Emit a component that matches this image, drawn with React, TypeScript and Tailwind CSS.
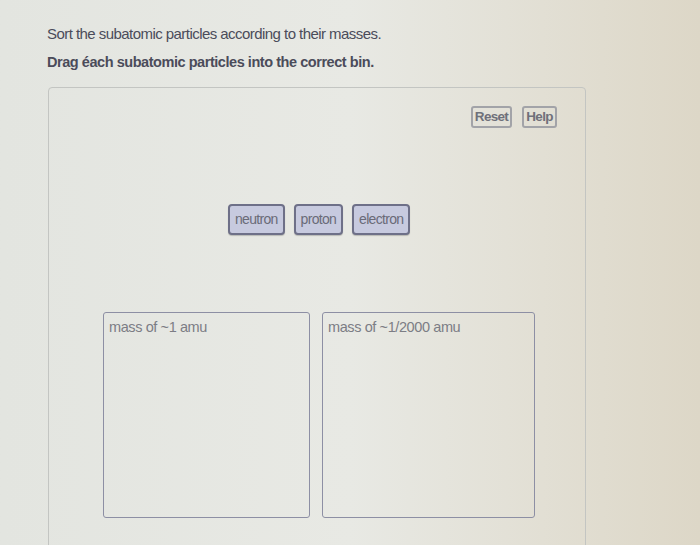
import React from 'react';

const particles = ['neutron', 'proton', 'electron'];

const bins = [
  { label: 'mass of ~1 amu', w: 'w-[207px]' },
  { label: 'mass of ~1/2000 amu', w: 'w-[213px]' },
];

export default function App() {
  return (
    <div className="h-[545px] w-[700px] overflow-hidden bg-gradient-to-r from-[#e3e5e0] via-[#e8e9e4] to-[#ddd7c7] font-['Liberation_Sans',Arial,sans-serif] text-[#4b4c5a]">
      <div className="pl-[47px] pt-[24px]">
        <p className="text-[15px] leading-[20px] tracking-[-0.55px]">Sort the subatomic particles according to their masses.</p>
        <p className="mt-[8px] text-[14.5px] font-bold leading-[20px] tracking-[-0.45px]">Drag éach subatomic particles into the correct bin.</p>
      </div>

      <div className="ml-[48px] mt-[15px] h-[470px] w-[538px] rounded-t-[4px] border border-[#c3c5c2] pt-[18px]">
        <div className="flex justify-end gap-[10px] pr-[28px]">
          <button className="h-[22px] rounded-[3px] border-2 border-[#a2a3a8] px-[2px] text-[13.5px] font-bold leading-none tracking-[-0.7px] text-[#6f707a]">
            Reset
          </button>
          <button className="h-[22px] rounded-[3px] border-2 border-[#a2a3a8] px-[2px] text-[13.5px] font-bold leading-none tracking-[-0.6px] text-[#6f707a]">
            Help
          </button>
        </div>

        <div className="ml-[179px] mt-[76px] flex gap-[9px]">
          {particles.map((p) => (
            <div
              key={p}
              className="flex h-[31px] items-center rounded-[4px] border-2 border-[#6e7088] bg-[#c7cadf] px-[5px] text-[14px] tracking-[-0.7px] text-[#6a6b78] shadow-[0_1px_1px_rgba(0,0,0,0.2)]"
            >
              {p}
            </div>
          ))}
        </div>

        <div className="ml-[54px] mt-[77px] flex gap-[12px]">
          {bins.map((b) => (
            <div
              key={b.label}
              className={`${b.w} h-[206px] rounded-[3px] border-[1.5px] border-[#8d8fa4] px-[5px] pt-[4px] text-[14.5px] tracking-[-0.4px] text-[#7c7d85]`}
            >
              {b.label}
            </div>
          ))}
        </div>
      </div>
    </div>
  );
}
